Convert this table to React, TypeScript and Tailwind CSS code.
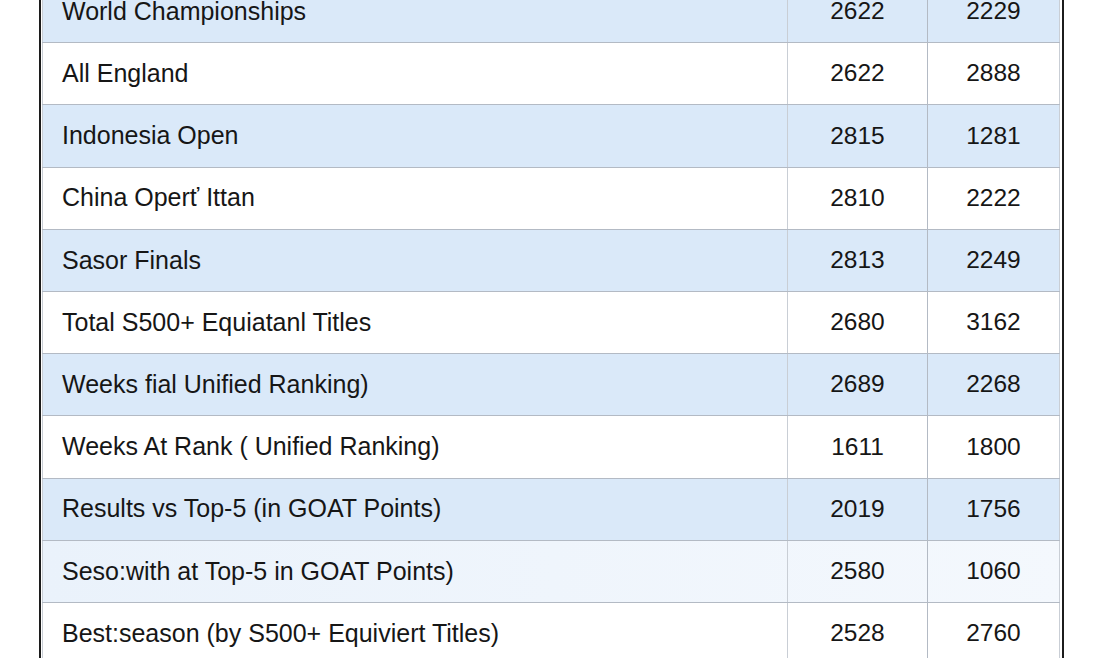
import React from 'react';

interface StatRow {
  label: string;
  a: string;
  b: string;
  tone: 'blue' | 'white' | 'fade';
}

const rows: StatRow[] = [
  { label: 'World Championships', a: '2622', b: '2229', tone: 'blue' },
  { label: 'All England', a: '2622', b: '2888', tone: 'white' },
  { label: 'Indonesia Open', a: '2815', b: '1281', tone: 'blue' },
  { label: 'China Operť Ittan', a: '2810', b: '2222', tone: 'white' },
  { label: 'Sasor Finals', a: '2813', b: '2249', tone: 'blue' },
  { label: 'Total S500+ Equiatanl Titles', a: '2680', b: '3162', tone: 'white' },
  { label: 'Weeks ﬁal Unified Ranking)', a: '2689', b: '2268', tone: 'blue' },
  { label: 'Weeks At Rank ( Unified Ranking)', a: '1611', b: '1800', tone: 'white' },
  { label: 'Results vs Top-5 (in GOAT Points)', a: '2019', b: '1756', tone: 'blue' },
  { label: 'Seso:with at Top-5 in GOAT Points)', a: '2580', b: '1060', tone: 'fade' },
  { label: 'Best:season (by S500+ Equiviert Titles)', a: '2528', b: '2760', tone: 'white' },
];

const toneClass = {
  blue: 'bg-[#dae9f9]',
  white: 'bg-white',
  fade: 'bg-gradient-to-r from-[#eaf2fb] to-[#f4f8fd]',
};

export default function App() {
  return (
    <div className="h-[658px] w-[1105px] overflow-hidden bg-white font-['Liberation_Sans',Arial,sans-serif] text-[#161616]">
      <div className="ml-[39px] mt-[-19px] w-[1025px] border-x-2 border-[#1c1c1c] pl-[1px] pr-[2px]">
        {rows.map((row) => (
          <div
            key={row.label}
            className={`grid h-[62.2px] grid-cols-[746px_140px_132px] border-b border-[#b3bac4] ${toneClass[row.tone]}`}
          >
            <div className="flex items-center border-x border-[#c9ced5] pl-[19px] text-[25px]">{row.label}</div>
            <div className="flex items-center justify-center border-r border-[#b3bac4] text-[24.5px]">{row.a}</div>
            <div className="flex items-center justify-center border-r border-[#c9ced5] text-[24.5px]">{row.b}</div>
          </div>
        ))}
      </div>
    </div>
  );
}
